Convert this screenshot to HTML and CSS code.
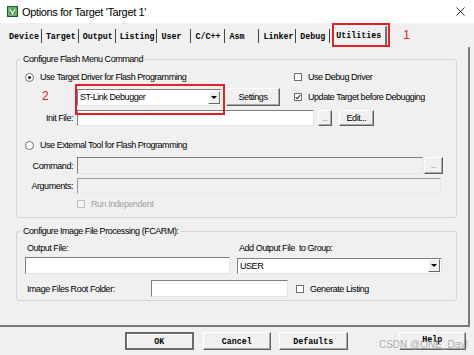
FILE: index.html
```html
<!DOCTYPE html>
<html lang="en">
<head>
  <meta charset="UTF-8" />
  <meta name="viewport" content="width=device-width, initial-scale=1.0" />
  <title>Options for Target 'Target 1'</title>
  <link rel="stylesheet" href="styles.css">
</head>
<body>
  <div class="window">
    <div class="titlebar">
      <svg class="app-icon" viewBox="0 0 11 11">
        <rect x="0.5" y="0.5" width="10" height="10" fill="#2f8b3b" stroke="#1d5f26"/>
        <rect x="2" y="2" width="7" height="7" fill="none" stroke="#bfe3bf" stroke-width="0.8"/>
        <path d="M3.3 3.2 L5.5 8 L7.7 3.2" fill="none" stroke="#fff" stroke-width="1.3"/>
      </svg>
      <span class="title">Options for Target 'Target 1'</span>
      <svg class="close" viewBox="0 0 9 9">
        <path d="M0.5 0.5 L8.5 8.5 M8.5 0.5 L0.5 8.5" stroke="#333" stroke-width="1"/>
      </svg>
    </div>

    <!-- tab strip -->
    <div class="tabs">
      <span class="tab">Device</span>
      <span class="tab">Target</span>
      <span class="tab">Output</span>
      <span class="tab">Listing</span>
      <span class="tab">User</span>
      <span class="tab">C/C++</span>
      <span class="tab">Asm</span>
      <span class="tab">Linker</span>
      <span class="tab">Debug</span>
      <span class="highlight">
        <span class="tab active">Utilities</span>
      </span>
      <span class="mark mark-1">1</span>
    </div>

    <div class="panel">
      <div class="group group-flash">
        <span class="legend">Configure Flash Menu Command</span>

        <div class="row row-opt1">
          <span class="opt opt-left"><span class="radio checked"></span><span class="opt-text">Use Target Driver for Flash Programming</span></span>
          <span class="opt"><span class="check"></span><span class="opt-text">Use Debug Driver</span></span>
        </div>

        <div class="row row-driver">
          <span class="mark mark-2">2</span>
          <span class="select select-driver">ST-Link Debugger<span class="drop"><span class="arrow"></span></span></span>
          <span class="btn btn-settings">Settings</span>
          <span class="opt opt-update"><span class="check checked"><svg viewBox="0 0 8 8"><path d="M1 4 L3 6.3 L7 1.5" fill="none" stroke="#222" stroke-width="1.4"/></svg></span><span class="opt-text">Update Target before Debugging</span></span>
        </div>

        <div class="row row-init">
          <span class="field-label">Init File:</span>
          <span class="field field-init"></span>
          <span class="btn btn-dots">...</span>
          <span class="btn btn-edit">Edit...</span>
        </div>

        <div class="row row-opt2">
          <span class="opt"><span class="radio"></span><span class="opt-text">Use External Tool for Flash Programming</span></span>
        </div>

        <div class="row row-command">
          <span class="field-label">Command:</span>
          <span class="field field-command disabled"></span>
          <span class="btn btn-dots btn-dots-wide">...</span>
        </div>

        <div class="row row-args">
          <span class="field-label">Arguments:</span>
          <span class="field field-args disabled"></span>
        </div>

        <div class="row row-run">
          <span class="opt"><span class="check disabled"></span><span class="opt-text grey">Run Independent</span></span>
        </div>

        <span class="red-box"></span>
      </div>

      <div class="group group-image">
        <span class="legend">Configure Image File Processing (FCARM):</span>

        <div class="row row-labels">
          <span class="output-label">Output File:</span>
          <span>Add Output File&nbsp; to Group:</span>
        </div>

        <div class="row row-output">
          <span class="field field-output"></span>
          <span class="select select-group">USER<span class="drop"><span class="arrow"></span></span></span>
        </div>

        <div class="row row-root">
          <span class="root-label">Image Files Root Folder:</span>
          <span class="field field-root"></span>
          <span class="opt opt-listing"><span class="check"></span><span class="opt-text">Generate Listing</span></span>
        </div>
      </div>
    </div>

    <div class="buttons">
      <span class="dlg-btn default">OK</span>
      <span class="dlg-btn">Cancel</span>
      <span class="dlg-btn">Defaults</span>
      <span class="dlg-btn help">Help</span>
    </div>

    <span class="watermark">CSDN @ONE_Day!</span>
  </div>
</body>
</html>
```

FILE: styles.css
```css
* {
  box-sizing: border-box;
}
body, html {
  margin: 0;
  padding: 0;
  background-color: #f0f0f0;
  font-family: "Liberation Sans", Arial, sans-serif;
  font-size: 9px;
  letter-spacing: -0.45px;
  color: #000;
}
.window {
  width: 474px;
  height: 355px;
  position: relative;
  overflow: hidden;
  background-color: #f0f0f0;
}

/* title bar */
.titlebar {
  height: 23px;
  background-color: #fff;
  display: flex;
  align-items: center;
  padding: 0 9px 0 7px;
}
.app-icon {
  width: 11px;
  height: 11px;
  margin-right: 4px;
}
.title {
  flex: 1;
  font-size: 11px;
  letter-spacing: -0.35px;
}
.close {
  width: 9px;
  height: 9px;
}

/* tabs */
.tabs {
  height: 24px;
  display: flex;
  align-items: center;
  padding-left: 9px;
  font-family: "Liberation Mono", monospace;
  font-weight: bold;
  font-size: 8.3px;
  letter-spacing: 0;
}
.tab {
  display: flex;
  align-items: center;
  min-width: 30px;
  height: 14px;
  padding-right: 2px;
  margin-right: 4px;
  border-right: 1.5px solid #444;
  margin-top: 2px;
}
.highlight {
  display: flex;
  align-items: flex-end;
  height: 24px;
  width: 58px;
  margin-left: -2px;
  border: 2px solid #e2222b;
}
.tab.active {
  height: 19px;
  margin: 0;
  padding: 0 4px 2px 1px;
  border-top: 1px solid #fff;
  border-left: 1px solid #fff;
  border-right: 2px solid #6d6d6d;
}
.mark {
  color: #e2222b;
  font-family: "Liberation Sans", Arial, sans-serif;
  font-weight: normal;
  font-size: 12px;
  letter-spacing: 0;
}
.mark-1 {
  margin-left: 13px;
}

/* tab page */
.panel {
  width: 470px;
  height: 280px;
  padding-top: 12px;
  border-right: 2px solid #7a7a7a;
  border-bottom: 2px solid #7a7a7a;
}
.group {
  position: relative;
  margin-left: 16px;
  width: 441px;
  border: 1px solid #d3d3d3;
  border-radius: 3px;
}
.group-flash {
  height: 159px;
}
.group-image {
  height: 70px;
  margin-top: 13px;
}
.legend {
  position: absolute;
  left: 4px;
  top: -7px;
  padding: 0 2px;
  line-height: 12px;
  background-color: #f0f0f0;
}
.row {
  display: flex;
  align-items: center;
}
.opt {
  display: flex;
  align-items: center;
}
.opt-text {
  margin-left: 6px;
}
.grey {
  color: #a3a3a3;
}
.radio {
  width: 9px;
  height: 9px;
  border: 1px solid #6f6f6f;
  border-radius: 50%;
  background-color: #fff;
  position: relative;
}
.radio.checked::after {
  content: "";
  position: absolute;
  left: 2px;
  top: 2px;
  width: 3px;
  height: 3px;
  border-radius: 50%;
  background-color: #222;
}
.check {
  width: 8px;
  height: 8px;
  border: 1px solid #707070;
  background-color: #fff;
  display: flex;
}
.check svg {
  width: 6px;
  height: 6px;
}
.check.disabled {
  border-color: #bdbdbd;
  background-color: #f4f4f4;
}
.field {
  background-color: #fff;
  border: 1px solid;
  border-color: #7f7f7f #e4e4e4 #e4e4e4 #7f7f7f;
}
.field.disabled {
  background-color: #f0f0f0;
}
.field-label {
  width: 56px;
  margin-right: 4px;
  text-align: right;
}
.select {
  display: flex;
  align-items: center;
  background-color: #fff;
  border: 1px solid;
  border-color: #7f7f7f #e4e4e4 #e4e4e4 #7f7f7f;
  padding-left: 2px;
}
.drop {
  margin-left: auto;
  width: 12px;
  height: 13px;
  margin-right: 1px;
  display: flex;
  align-items: center;
  justify-content: center;
  background-color: #f0f0f0;
  border: 1px solid;
  border-color: #fff #6a6a6a #6a6a6a #fff;
}
.arrow {
  width: 0;
  height: 0;
  border-left: 3px solid transparent;
  border-right: 3px solid transparent;
  border-top: 3px solid #000;
}
.btn {
  display: flex;
  align-items: center;
  justify-content: center;
  background-color: #f0f0f0;
  border: 1px solid;
  border-color: #fff #5f5f5f #5f5f5f #fff;
  box-shadow: inset -1px -1px #a8a8a8;
}

/* flash group rows */
.row-opt1 {
  margin-top: 10px;
  height: 14px;
  padding-left: 8px;
}
.opt-left {
  width: 269px;
}
.row-driver {
  margin-top: 4px;
  height: 18px;
  padding-left: 25px;
}
.mark-2 {
  width: 35px;
  margin-top: -2px;
}
.select-driver {
  width: 145px;
  height: 17px;
}
.btn-settings {
  width: 54px;
  height: 18px;
  margin-left: 4px;
}
.opt-update {
  margin-left: 14px;
}
.row-init {
  margin-top: 4px;
  height: 16px;
}
.field-init {
  width: 237px;
  height: 16px;
}
.btn-dots {
  width: 14px;
  height: 16px;
  margin-left: 4px;
  color: #777;
  font-size: 8px;
}
.btn-edit {
  width: 35px;
  height: 16px;
  margin-left: 7px;
}
.row-opt2 {
  margin-top: 12px;
  height: 14px;
  padding-left: 8px;
}
.row-command {
  margin-top: 5px;
  height: 17px;
}
.field-command {
  width: 346px;
  height: 17px;
}
.btn-dots-wide {
  width: 19px;
  height: 17px;
  margin-left: 1px;
}
.row-args {
  margin-top: 4px;
  height: 16px;
}
.field-args {
  width: 364px;
  height: 16px;
  border-color: #9a9a9a #e8e8e8 #e8e8e8 #9a9a9a;
}
.row-run {
  margin-top: 4px;
  height: 12px;
  padding-left: 60px;
}
.red-box {
  position: absolute;
  left: 58px;
  top: 24px;
  width: 150px;
  height: 31px;
  border: 2px solid #e2222b;
}

/* image group rows */
.row-labels {
  margin-top: 10px;
  height: 12px;
  padding-left: 10px;
}
.output-label {
  width: 212px;
}
.row-output {
  margin-top: 3px;
  height: 17px;
  padding-left: 8px;
}
.field-output {
  width: 205px;
  height: 17px;
}
.select-group {
  width: 205px;
  height: 16px;
  margin-left: 7px;
}
.row-root {
  margin-top: 6px;
  height: 17px;
  padding-left: 10px;
}
.root-label {
  width: 124px;
}
.field-root {
  width: 137px;
  height: 17px;
}
.opt-listing {
  margin-left: 8px;
}

/* dialog buttons */
.buttons {
  display: flex;
  margin-top: 5px;
  padding-left: 125px;
  font-family: "Liberation Mono", monospace;
  font-weight: bold;
  font-size: 8.3px;
  letter-spacing: 0;
}
.dlg-btn {
  display: flex;
  align-items: center;
  justify-content: center;
  width: 69px;
  height: 18px;
  margin-right: 8px;
  background-color: #f0f0f0;
  border: 1px solid;
  border-color: #fff #5f5f5f #5f5f5f #fff;
  box-shadow: inset -1px -1px #a8a8a8;
}
.dlg-btn.default {
  margin-right: 9px;
  border: 2px solid #6a6a6a;
  box-shadow: inset 1px 1px #fff;
}
.dlg-btn.help {
  margin-left: 43px;
  width: 68px;
  padding-bottom: 3px;
}
.watermark {
  position: absolute;
  right: 6px;
  bottom: 5px;
  font-family: "Liberation Sans", Arial, sans-serif;
  font-size: 10px;
  letter-spacing: 0;
  color: rgba(140, 140, 140, 0.7);
}
```
